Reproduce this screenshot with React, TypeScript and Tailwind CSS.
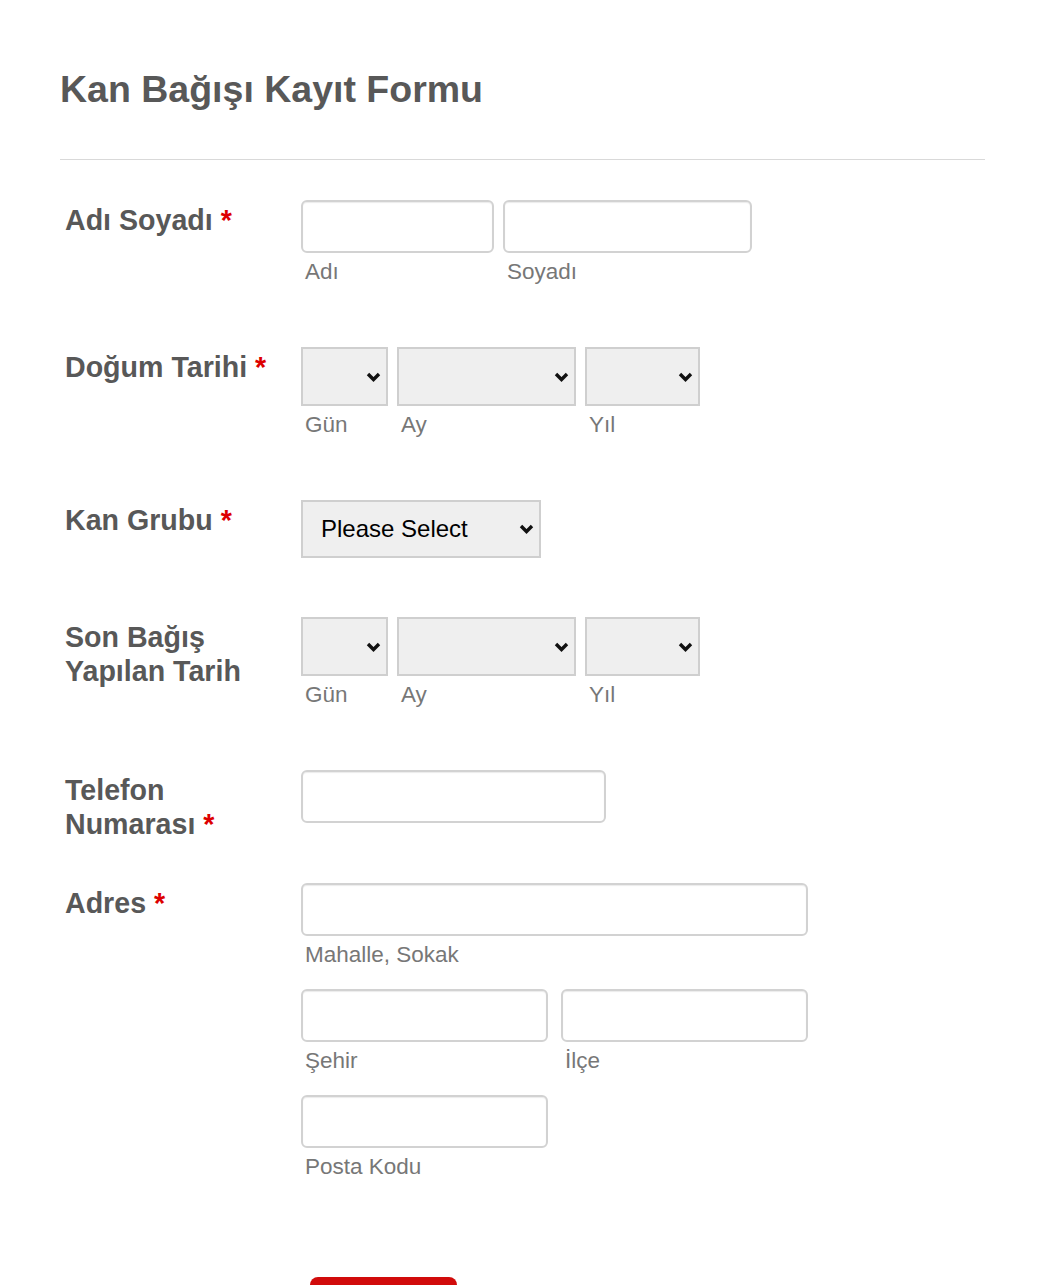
import { ReactNode } from 'react';

const font = "font-['Liberation_Sans',Arial,Helvetica,sans-serif]";

const Chevron = () => (
	<svg
		className="pointer-events-none absolute right-[7px] top-1/2 -translate-y-1/2"
		width="15"
		height="10"
		viewBox="0 0 15 10"
		fill="none"
	>
		<polyline points="2,2 7.5,7.5 13,2" stroke="#111" strokeWidth="3.4" />
	</svg>
);

interface FieldProps {
	width: string;
	sub?: string;
}

// metin kutusu + alt etiket
const TextBox = ({ width, sub }: FieldProps) => (
	<div className={width}>
		<input
			type="text"
			className="block h-[53px] w-full rounded-[6px] border-2 border-[#d2d2d2] bg-white shadow-[inset_0_1px_1px_rgba(0,0,0,0.08)] outline-none"
		/>
		{sub && (
			<div className="mt-[6px] pl-[4px] text-[22.5px] leading-[26px] text-[#777]">{sub}</div>
		)}
	</div>
);

const SelectBox = ({ width, sub }: FieldProps) => (
	<div className={width}>
		<div className="relative">
			<select className="block h-[59px] w-full appearance-none border-2 border-[#cfcfcf] bg-[#efefef] outline-none">
				<option></option>
			</select>
			<Chevron />
		</div>
		{sub && (
			<div className="mt-[6px] pl-[4px] text-[22.5px] leading-[26px] text-[#777]">{sub}</div>
		)}
	</div>
);

const Row = ({
	label,
	required,
	className,
	children,
}: {
	label: ReactNode;
	required?: boolean;
	className?: string;
	children: ReactNode;
}) => (
	<div className={`flex ${className ?? ''}`}>
		<div className="w-[241px] shrink-0 pl-[5px] pr-[20px] pt-[3px] text-[28.6px] font-bold leading-[34px] text-[#585858]">
			{label}
			{required && <span className="text-[#d00]"> *</span>}
		</div>
		<div className="flex-1">{children}</div>
	</div>
);

const DateRow = () => (
	<div className="flex gap-[9px]">
		<SelectBox width="w-[87px]" sub="Gün" />
		<SelectBox width="w-[179px]" sub="Ay" />
		<SelectBox width="w-[115px]" sub="Yıl" />
	</div>
);

export default function App() {
	return (
		<div className={`min-h-screen bg-white ${font}`}>
			<div className="pl-[60px] pr-[59px] pt-[67px]">
				<h1 className="text-[37.5px] font-bold leading-[44px] text-[#585858]">
					Kan Bağışı Kayıt Formu
				</h1>
				<div className="mt-[48px] h-px bg-[#d9d9d9]" />

				<Row label="Adı Soyadı" required className="mt-[40px]">
					<div className="flex gap-[9px]">
						<TextBox width="w-[193px]" sub="Adı" />
						<TextBox width="w-[249px]" sub="Soyadı" />
					</div>
				</Row>

				<Row label="Doğum Tarihi" required className="mt-[62px]">
					<DateRow />
				</Row>

				<Row label="Kan Grubu" required className="mt-[62px]">
					<div className="relative w-[240px]">
						<select className="block h-[58px] w-full appearance-none border-2 border-[#cfcfcf] bg-[#efefef] pl-[18px] text-[24px] text-black outline-none">
							<option>Please Select</option>
						</select>
						<Chevron />
					</div>
				</Row>

				<Row label="Son Bağış Yapılan Tarih" className="mt-[59px]">
					<DateRow />
				</Row>

				<Row
					label={
						<>
							Telefon
							<br />
							Numarası
						</>
					}
					required
					className="mt-[62px]"
				>
					<TextBox width="w-[305px]" />
				</Row>

				<Row label="Adres" required className="mt-[42px]">
					<div className="flex flex-col gap-[21px]">
						<TextBox width="w-[507px]" sub="Mahalle, Sokak" />
						<div className="flex gap-[13px]">
							<TextBox width="w-[247px]" sub="Şehir" />
							<TextBox width="w-[247px]" sub="İlçe" />
						</div>
						<TextBox width="w-[247px]" sub="Posta Kodu" />
					</div>
				</Row>

				<div className="mt-[97px] pl-[250px] pb-[40px]">
					<button
						aria-label="Gönder"
						className="h-[52px] w-[147px] rounded-[8px] bg-[#d10b0b]"
					/>
				</div>
			</div>
		</div>
	);
}
